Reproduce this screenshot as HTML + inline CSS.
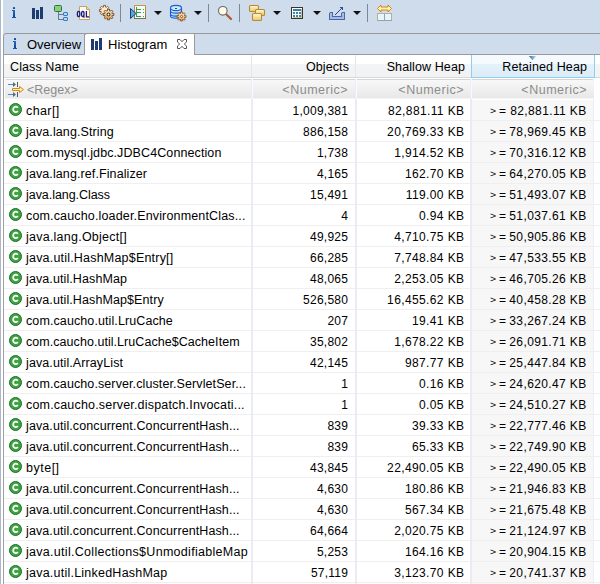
<!DOCTYPE html>
<html><head><meta charset="utf-8">
<style>
*{box-sizing:border-box}
html,body{margin:0;padding:0}
body{width:600px;height:584px;overflow:hidden;position:relative;background:#cfdcec;font-family:"Liberation Sans",sans-serif;font-size:12px;color:#000}
.a{position:absolute}
#edge0{left:0;top:0;width:1px;height:584px;background:#adb5cb}
#edge1{left:1px;top:0;width:2px;height:584px;background:#fff}
.sep{position:absolute;top:4px;width:1px;height:18px;background:#7a8898}
.dd{position:absolute;top:11px;width:0;height:0;border-left:4px solid transparent;border-right:4px solid transparent;border-top:4.5px solid #111}
/* tabs */
#tabline{left:194px;top:33px;width:406px;height:22px;border-top:1px solid #9a9a9a;border-bottom:1px solid #9a9a9a}
#tab1{left:3px;top:33px;width:82px;height:22px;border:1px solid #9a9a9a;border-radius:3px 0 0 0;background:#cfdcec}
#tab2{left:85px;top:33px;width:110px;height:22px;border:1px solid #9a9a9a;border-bottom:none;border-left:none;background:#fff}
.tt{position:absolute;top:37px;font-size:13px;white-space:nowrap}
/* table */
#tbl{left:3px;top:55px;width:597px;height:529px;background:#fff;border-left:1px solid #a0a0a0}
#hdr{left:4px;top:55px;width:596px;height:23px;background:linear-gradient(#fff 0,#fff 9px,#f3f4f6 9px,#f1f2f4 22px)}
#hdrb{left:4px;top:77px;width:596px;height:1px;background:#d8d8d8}
.hs{position:absolute;top:55px;width:1px;height:22px;background:#e4e6ea}
#rh{left:471px;top:55px;width:124px;height:23px;border:1px solid #90cdf2;border-top:none;background:linear-gradient(#f4fafe 0,#f4fafe 9px,#e4f2fb 9px,#dcecf8 22px)}
.ht{position:absolute;top:60px;white-space:nowrap;font-size:12.5px;letter-spacing:0.1px}
#fstrip{left:5px;top:79px;width:589px;height:20px;border-top:1px solid #d6d6d6;border-radius:2px 2px 0 0;background:linear-gradient(#f8f8f8,#e8e8e8 18px,#f4f4f4 18px)}
.fsep{position:absolute;top:79px;width:2px;height:20px;border-left:1px solid #e8eefa;border-right:1px solid #fafafa}
.ft{position:absolute;top:83px;white-space:nowrap;color:#8c8c8c;font-size:12.5px;letter-spacing:0.5px}
.row{position:absolute;left:4px;width:596px;height:21px;border-bottom:1px solid #efefef}
.vl{position:absolute;top:99px;height:485px;width:2px;border-left:1px solid #e6eefa;border-right:1px solid #ececec;z-index:2}
#rcol{left:472px;top:100px;width:121px;height:484px;background:#f7f7f7}
.c{position:absolute;white-space:nowrap;top:4px;letter-spacing:0.15px}
.cn{left:22px;font-size:12.5px;letter-spacing:0.1px}
.n1{right:251.8px;letter-spacing:0.25px}
.n2{right:135.6px;letter-spacing:0.38px}
.n3{right:13.4px;letter-spacing:0.38px}
.gt{position:absolute;left:486px;top:4px;font-size:10.5px;transform:scaleY(0.8);transform-origin:50% 75%}
.eq{position:absolute;left:495px;top:4px}
.ic{position:absolute;left:5px;top:3px;width:14px;height:14px}
.srt{position:absolute;left:529px;top:56px;width:0;height:0;border-left:3.5px solid transparent;border-right:3.5px solid transparent;border-top:4px solid #5a9ac0}
</style></head><body>
<div class="a" id="edge0"></div><div class="a" id="edge1"></div>

<!-- toolbar separators -->
<div class="sep" style="left:120px"></div>
<div class="sep" style="left:208px"></div>
<div class="sep" style="left:239px"></div>
<div class="sep" style="left:367px"></div>
<div class="dd" style="left:154px"></div>
<div class="dd" style="left:194px"></div>
<div class="dd" style="left:273px"></div>
<div class="dd" style="left:313px"></div>
<div class="dd" style="left:353px"></div>

<!-- tabs -->
<div class="a" id="tabline"></div>
<div class="a" id="tab1"></div>
<div class="a" id="tab2"></div>
<div class="a" style="left:85px;top:34px;width:1px;height:1px;background:#b0b0b0"></div>
<div class="tt" style="left:27px">Overview</div>
<div class="tt" style="left:108px">Histogram</div>

<!-- table -->
<div class="a" id="tbl"></div>
<div class="a" id="hdr"></div>
<div class="a" id="hdrb"></div>
<div class="hs" style="left:251px"></div>
<div class="hs" style="left:355px"></div>
<div class="a" id="rh"></div>
<svg class="a" style="left:528px;top:55px" width="10" height="7" viewBox="0 0 10 7"><defs><linearGradient id="gS" x1="0" y1="0" x2="1" y2="0"><stop offset="0" stop-color="#3a6c94"/><stop offset="1" stop-color="#b4def6"/></linearGradient></defs><path d="M0.8,1 H8.2 L4.5,5.2 Z" fill="url(#gS)"/></svg>
<div class="ht" style="left:10px">Class Name</div>
<div class="ht" style="right:251px">Objects</div>
<div class="ht" style="right:135px">Shallow Heap</div>
<div class="ht" style="right:13px">Retained Heap</div>

<div class="a" id="fstrip"></div>
<div class="fsep" style="left:251px"></div>
<div class="fsep" style="left:355px"></div>
<div class="fsep" style="left:470px"></div>
<div class="ft" style="left:27px;letter-spacing:0">&lt;Regex&gt;</div>
<div class="ft" style="right:252px">&lt;Numeric&gt;</div>
<div class="ft" style="right:136px">&lt;Numeric&gt;</div>
<div class="ft" style="right:13px">&lt;Numeric&gt;</div>

<div class="a" id="rcol"></div>
<div class="vl" style="left:251px"></div>
<div class="vl" style="left:355px"></div>
<div class="vl" style="left:470px"></div>
<div class="vl" style="left:593px;width:1px;border-right:none"></div>
<div class="row" style="top:100px"><svg class="ic" width="14" height="14" viewBox="0 0 14 14"><circle cx="6.5" cy="6.5" r="6" fill="#3ca33e" stroke="#1f6e2c" stroke-width="1"/><path d="M8.85,4.8 A2.6,2.75 0 1 0 8.85,8.1" fill="none" stroke="#fff" stroke-width="1.75"/></svg><div class="c cn" style="letter-spacing:0.4px">char[]</div><div class="c n1">1,009,381</div><div class="c n2">82,881.11 KB</div><div class="gt">&gt;</div><div class="eq">=</div><div class="c n3">82,881.11 KB</div></div>
<div class="row" style="top:121px"><svg class="ic" width="14" height="14" viewBox="0 0 14 14"><circle cx="6.5" cy="6.5" r="6" fill="#3ca33e" stroke="#1f6e2c" stroke-width="1"/><path d="M8.85,4.8 A2.6,2.75 0 1 0 8.85,8.1" fill="none" stroke="#fff" stroke-width="1.75"/></svg><div class="c cn">java.lang.String</div><div class="c n1">886,158</div><div class="c n2">20,769.33 KB</div><div class="gt">&gt;</div><div class="eq">=</div><div class="c n3">78,969.45 KB</div></div>
<div class="row" style="top:142px"><svg class="ic" width="14" height="14" viewBox="0 0 14 14"><circle cx="6.5" cy="6.5" r="6" fill="#3ca33e" stroke="#1f6e2c" stroke-width="1"/><path d="M8.85,4.8 A2.6,2.75 0 1 0 8.85,8.1" fill="none" stroke="#fff" stroke-width="1.75"/></svg><div class="c cn">com.mysql.jdbc.JDBC4Connection</div><div class="c n1">1,738</div><div class="c n2">1,914.52 KB</div><div class="gt">&gt;</div><div class="eq">=</div><div class="c n3">70,316.12 KB</div></div>
<div class="row" style="top:163px"><svg class="ic" width="14" height="14" viewBox="0 0 14 14"><circle cx="6.5" cy="6.5" r="6" fill="#3ca33e" stroke="#1f6e2c" stroke-width="1"/><path d="M8.85,4.8 A2.6,2.75 0 1 0 8.85,8.1" fill="none" stroke="#fff" stroke-width="1.75"/></svg><div class="c cn">java.lang.ref.Finalizer</div><div class="c n1">4,165</div><div class="c n2">162.70 KB</div><div class="gt">&gt;</div><div class="eq">=</div><div class="c n3">64,270.05 KB</div></div>
<div class="row" style="top:184px"><svg class="ic" width="14" height="14" viewBox="0 0 14 14"><circle cx="6.5" cy="6.5" r="6" fill="#3ca33e" stroke="#1f6e2c" stroke-width="1"/><path d="M8.85,4.8 A2.6,2.75 0 1 0 8.85,8.1" fill="none" stroke="#fff" stroke-width="1.75"/></svg><div class="c cn" style="letter-spacing:-0.05px">java.lang.Class</div><div class="c n1">15,491</div><div class="c n2">119.00 KB</div><div class="gt">&gt;</div><div class="eq">=</div><div class="c n3">51,493.07 KB</div></div>
<div class="row" style="top:205px"><svg class="ic" width="14" height="14" viewBox="0 0 14 14"><circle cx="6.5" cy="6.5" r="6" fill="#3ca33e" stroke="#1f6e2c" stroke-width="1"/><path d="M8.85,4.8 A2.6,2.75 0 1 0 8.85,8.1" fill="none" stroke="#fff" stroke-width="1.75"/></svg><div class="c cn" style="letter-spacing:0.155px">com.caucho.loader.EnvironmentClas...</div><div class="c n1">4</div><div class="c n2">0.94 KB</div><div class="gt">&gt;</div><div class="eq">=</div><div class="c n3">51,037.61 KB</div></div>
<div class="row" style="top:226px"><svg class="ic" width="14" height="14" viewBox="0 0 14 14"><circle cx="6.5" cy="6.5" r="6" fill="#3ca33e" stroke="#1f6e2c" stroke-width="1"/><path d="M8.85,4.8 A2.6,2.75 0 1 0 8.85,8.1" fill="none" stroke="#fff" stroke-width="1.75"/></svg><div class="c cn" style="letter-spacing:0.24px">java.lang.Object[]</div><div class="c n1">49,925</div><div class="c n2">4,710.75 KB</div><div class="gt">&gt;</div><div class="eq">=</div><div class="c n3">50,905.86 KB</div></div>
<div class="row" style="top:247px"><svg class="ic" width="14" height="14" viewBox="0 0 14 14"><circle cx="6.5" cy="6.5" r="6" fill="#3ca33e" stroke="#1f6e2c" stroke-width="1"/><path d="M8.85,4.8 A2.6,2.75 0 1 0 8.85,8.1" fill="none" stroke="#fff" stroke-width="1.75"/></svg><div class="c cn" style="letter-spacing:0.2px">java.util.HashMap$Entry[]</div><div class="c n1">66,285</div><div class="c n2">7,748.84 KB</div><div class="gt">&gt;</div><div class="eq">=</div><div class="c n3">47,533.55 KB</div></div>
<div class="row" style="top:268px"><svg class="ic" width="14" height="14" viewBox="0 0 14 14"><circle cx="6.5" cy="6.5" r="6" fill="#3ca33e" stroke="#1f6e2c" stroke-width="1"/><path d="M8.85,4.8 A2.6,2.75 0 1 0 8.85,8.1" fill="none" stroke="#fff" stroke-width="1.75"/></svg><div class="c cn">java.util.HashMap</div><div class="c n1">48,065</div><div class="c n2">2,253.05 KB</div><div class="gt">&gt;</div><div class="eq">=</div><div class="c n3">46,705.26 KB</div></div>
<div class="row" style="top:289px"><svg class="ic" width="14" height="14" viewBox="0 0 14 14"><circle cx="6.5" cy="6.5" r="6" fill="#3ca33e" stroke="#1f6e2c" stroke-width="1"/><path d="M8.85,4.8 A2.6,2.75 0 1 0 8.85,8.1" fill="none" stroke="#fff" stroke-width="1.75"/></svg><div class="c cn">java.util.HashMap$Entry</div><div class="c n1">526,580</div><div class="c n2">16,455.62 KB</div><div class="gt">&gt;</div><div class="eq">=</div><div class="c n3">40,458.28 KB</div></div>
<div class="row" style="top:310px"><svg class="ic" width="14" height="14" viewBox="0 0 14 14"><circle cx="6.5" cy="6.5" r="6" fill="#3ca33e" stroke="#1f6e2c" stroke-width="1"/><path d="M8.85,4.8 A2.6,2.75 0 1 0 8.85,8.1" fill="none" stroke="#fff" stroke-width="1.75"/></svg><div class="c cn">com.caucho.util.LruCache</div><div class="c n1">207</div><div class="c n2">19.41 KB</div><div class="gt">&gt;</div><div class="eq">=</div><div class="c n3">33,267.24 KB</div></div>
<div class="row" style="top:331px"><svg class="ic" width="14" height="14" viewBox="0 0 14 14"><circle cx="6.5" cy="6.5" r="6" fill="#3ca33e" stroke="#1f6e2c" stroke-width="1"/><path d="M8.85,4.8 A2.6,2.75 0 1 0 8.85,8.1" fill="none" stroke="#fff" stroke-width="1.75"/></svg><div class="c cn" style="letter-spacing:0.05px">com.caucho.util.LruCache$CacheItem</div><div class="c n1">35,802</div><div class="c n2">1,678.22 KB</div><div class="gt">&gt;</div><div class="eq">=</div><div class="c n3">26,091.71 KB</div></div>
<div class="row" style="top:352px"><svg class="ic" width="14" height="14" viewBox="0 0 14 14"><circle cx="6.5" cy="6.5" r="6" fill="#3ca33e" stroke="#1f6e2c" stroke-width="1"/><path d="M8.85,4.8 A2.6,2.75 0 1 0 8.85,8.1" fill="none" stroke="#fff" stroke-width="1.75"/></svg><div class="c cn">java.util.ArrayList</div><div class="c n1">42,145</div><div class="c n2">987.77 KB</div><div class="gt">&gt;</div><div class="eq">=</div><div class="c n3">25,447.84 KB</div></div>
<div class="row" style="top:373px"><svg class="ic" width="14" height="14" viewBox="0 0 14 14"><circle cx="6.5" cy="6.5" r="6" fill="#3ca33e" stroke="#1f6e2c" stroke-width="1"/><path d="M8.85,4.8 A2.6,2.75 0 1 0 8.85,8.1" fill="none" stroke="#fff" stroke-width="1.75"/></svg><div class="c cn">com.caucho.server.cluster.ServletSer...</div><div class="c n1">1</div><div class="c n2">0.16 KB</div><div class="gt">&gt;</div><div class="eq">=</div><div class="c n3">24,620.47 KB</div></div>
<div class="row" style="top:394px"><svg class="ic" width="14" height="14" viewBox="0 0 14 14"><circle cx="6.5" cy="6.5" r="6" fill="#3ca33e" stroke="#1f6e2c" stroke-width="1"/><path d="M8.85,4.8 A2.6,2.75 0 1 0 8.85,8.1" fill="none" stroke="#fff" stroke-width="1.75"/></svg><div class="c cn" style="letter-spacing:0.18px">com.caucho.server.dispatch.Invocati...</div><div class="c n1">1</div><div class="c n2">0.05 KB</div><div class="gt">&gt;</div><div class="eq">=</div><div class="c n3">24,510.27 KB</div></div>
<div class="row" style="top:415px"><svg class="ic" width="14" height="14" viewBox="0 0 14 14"><circle cx="6.5" cy="6.5" r="6" fill="#3ca33e" stroke="#1f6e2c" stroke-width="1"/><path d="M8.85,4.8 A2.6,2.75 0 1 0 8.85,8.1" fill="none" stroke="#fff" stroke-width="1.75"/></svg><div class="c cn">java.util.concurrent.ConcurrentHash...</div><div class="c n1">839</div><div class="c n2">39.33 KB</div><div class="gt">&gt;</div><div class="eq">=</div><div class="c n3">22,777.46 KB</div></div>
<div class="row" style="top:436px"><svg class="ic" width="14" height="14" viewBox="0 0 14 14"><circle cx="6.5" cy="6.5" r="6" fill="#3ca33e" stroke="#1f6e2c" stroke-width="1"/><path d="M8.85,4.8 A2.6,2.75 0 1 0 8.85,8.1" fill="none" stroke="#fff" stroke-width="1.75"/></svg><div class="c cn">java.util.concurrent.ConcurrentHash...</div><div class="c n1">839</div><div class="c n2">65.33 KB</div><div class="gt">&gt;</div><div class="eq">=</div><div class="c n3">22,749.90 KB</div></div>
<div class="row" style="top:457px"><svg class="ic" width="14" height="14" viewBox="0 0 14 14"><circle cx="6.5" cy="6.5" r="6" fill="#3ca33e" stroke="#1f6e2c" stroke-width="1"/><path d="M8.85,4.8 A2.6,2.75 0 1 0 8.85,8.1" fill="none" stroke="#fff" stroke-width="1.75"/></svg><div class="c cn" style="letter-spacing:0.5px">byte[]</div><div class="c n1">43,845</div><div class="c n2">22,490.05 KB</div><div class="gt">&gt;</div><div class="eq">=</div><div class="c n3">22,490.05 KB</div></div>
<div class="row" style="top:478px"><svg class="ic" width="14" height="14" viewBox="0 0 14 14"><circle cx="6.5" cy="6.5" r="6" fill="#3ca33e" stroke="#1f6e2c" stroke-width="1"/><path d="M8.85,4.8 A2.6,2.75 0 1 0 8.85,8.1" fill="none" stroke="#fff" stroke-width="1.75"/></svg><div class="c cn">java.util.concurrent.ConcurrentHash...</div><div class="c n1">4,630</div><div class="c n2">180.86 KB</div><div class="gt">&gt;</div><div class="eq">=</div><div class="c n3">21,946.83 KB</div></div>
<div class="row" style="top:499px"><svg class="ic" width="14" height="14" viewBox="0 0 14 14"><circle cx="6.5" cy="6.5" r="6" fill="#3ca33e" stroke="#1f6e2c" stroke-width="1"/><path d="M8.85,4.8 A2.6,2.75 0 1 0 8.85,8.1" fill="none" stroke="#fff" stroke-width="1.75"/></svg><div class="c cn">java.util.concurrent.ConcurrentHash...</div><div class="c n1">4,630</div><div class="c n2">567.34 KB</div><div class="gt">&gt;</div><div class="eq">=</div><div class="c n3">21,675.48 KB</div></div>
<div class="row" style="top:520px"><svg class="ic" width="14" height="14" viewBox="0 0 14 14"><circle cx="6.5" cy="6.5" r="6" fill="#3ca33e" stroke="#1f6e2c" stroke-width="1"/><path d="M8.85,4.8 A2.6,2.75 0 1 0 8.85,8.1" fill="none" stroke="#fff" stroke-width="1.75"/></svg><div class="c cn">java.util.concurrent.ConcurrentHash...</div><div class="c n1">64,664</div><div class="c n2">2,020.75 KB</div><div class="gt">&gt;</div><div class="eq">=</div><div class="c n3">21,124.97 KB</div></div>
<div class="row" style="top:541px"><svg class="ic" width="14" height="14" viewBox="0 0 14 14"><circle cx="6.5" cy="6.5" r="6" fill="#3ca33e" stroke="#1f6e2c" stroke-width="1"/><path d="M8.85,4.8 A2.6,2.75 0 1 0 8.85,8.1" fill="none" stroke="#fff" stroke-width="1.75"/></svg><div class="c cn" style="letter-spacing:0.29px">java.util.Collections$UnmodifiableMap</div><div class="c n1">5,253</div><div class="c n2">164.16 KB</div><div class="gt">&gt;</div><div class="eq">=</div><div class="c n3">20,904.15 KB</div></div>
<div class="row" style="top:562px"><svg class="ic" width="14" height="14" viewBox="0 0 14 14"><circle cx="6.5" cy="6.5" r="6" fill="#3ca33e" stroke="#1f6e2c" stroke-width="1"/><path d="M8.85,4.8 A2.6,2.75 0 1 0 8.85,8.1" fill="none" stroke="#fff" stroke-width="1.75"/></svg><div class="c cn" style="letter-spacing:0.23px">java.util.LinkedHashMap</div><div class="c n1">57,119</div><div class="c n2">3,123.70 KB</div><div class="gt">&gt;</div><div class="eq">=</div><div class="c n3">20,741.37 KB</div></div>
<svg class="a" style="left:0;top:0" width="600" height="100" viewBox="0 0 600 100" shape-rendering="crispEdges">
<defs>
<linearGradient id="gI" x1="0" y1="0" x2="0" y2="1"><stop offset="0" stop-color="#2a6cc0"/><stop offset="1" stop-color="#08408e"/></linearGradient>
<linearGradient id="gG" x1="0" y1="0" x2="0" y2="1"><stop offset="0" stop-color="#fff6c8"/><stop offset="1" stop-color="#e8a848"/></linearGradient>
<linearGradient id="gG2" x1="0" y1="0" x2="0" y2="1"><stop offset="0" stop-color="#fffbe0"/><stop offset="1" stop-color="#f2d890"/></linearGradient>
<linearGradient id="gY" x1="0" y1="0" x2="0" y2="1"><stop offset="0" stop-color="#fff8d8"/><stop offset="1" stop-color="#e8c868"/></linearGradient>
<linearGradient id="gDB" x1="0" y1="0" x2="0" y2="1"><stop offset="0" stop-color="#d0eef8"/><stop offset="1" stop-color="#a8dcec"/></linearGradient>
</defs>
<g fill="url(#gI)"><rect x="13" y="7" width="2" height="2"/><rect x="12" y="10" width="3" height="1"/><rect x="13" y="10" width="2" height="8"/><rect x="12" y="17" width="4" height="1"/></g>
<g fill="#1d3c70"><rect x="32" y="8" width="3" height="11"/><rect x="36" y="10" width="3" height="9"/><rect x="40" y="7" width="3" height="12"/></g>
<path d="M58.5,12 V19.5 H63 M58.5,14.5 H63" stroke="#6a7888" fill="none" stroke-width="1"/>
<rect x="54.5" y="5.5" width="7" height="6" rx="1" fill="#90cc7c" stroke="#1f7a40" stroke-width="1" shape-rendering="auto"/>
<rect x="63.5" y="12.5" width="4" height="3" rx="0.5" fill="#a8e0f8" stroke="#3a78c8" shape-rendering="auto"/>
<rect x="63.5" y="17.5" width="4" height="3" rx="0.5" fill="#a8e0f8" stroke="#3a78c8" shape-rendering="auto"/>
<path d="M79.5,6.5 H86.5 L89.5,9.5 V19.5 H79.5 Z" fill="#fbfbfb" stroke="#c8a458" shape-rendering="auto"/>
<path d="M86.5,6.5 V9.5 H89.5" fill="#f0d890" stroke="#c8a458" shape-rendering="auto"/>
<g fill="none" stroke="#1c1c78" stroke-width="1.3" shape-rendering="auto"><ellipse cx="78.6" cy="14" rx="1.25" ry="2.6"/><ellipse cx="82.8" cy="14" rx="1.25" ry="2.6"/><path d="M83.2,15.8 L84.4,17.6"/><path d="M86.4,11 V16.8 H89.2"/></g>
<path d="M109.60,9.49 L109.60,11.51 L107.98,11.41 L107.61,12.32 L108.82,13.39 L107.39,14.82 L106.32,13.61 L105.41,13.98 L105.51,15.60 L103.49,15.60 L103.59,13.98 L102.68,13.61 L101.61,14.82 L100.18,13.39 L101.39,12.32 L101.02,11.41 L99.40,11.51 L99.40,9.49 L101.02,9.59 L101.39,8.68 L100.18,7.61 L101.61,6.18 L102.68,7.39 L103.59,7.02 L103.49,5.40 L105.51,5.40 L105.41,7.02 L106.32,7.39 L107.39,6.18 L108.82,7.61 L107.61,8.68 L107.98,9.59Z" fill="url(#gG2)" stroke="#8a5a48" stroke-width="1" shape-rendering="auto"/>
<path d="M113.80,13.45 L113.80,15.55 L112.18,15.46 L111.78,16.42 L112.99,17.50 L111.50,18.99 L110.42,17.78 L109.46,18.18 L109.55,19.80 L107.45,19.80 L107.54,18.18 L106.58,17.78 L105.50,18.99 L104.01,17.50 L105.22,16.42 L104.82,15.46 L103.20,15.55 L103.20,13.45 L104.82,13.54 L105.22,12.58 L104.01,11.50 L105.50,10.01 L106.58,11.22 L107.54,10.82 L107.45,9.20 L109.55,9.20 L109.46,10.82 L110.42,11.22 L111.50,10.01 L112.99,11.50 L111.78,12.58 L112.18,13.54Z" fill="url(#gG)" stroke="#7a4a38" stroke-width="1" shape-rendering="auto"/>
<circle cx="108.5" cy="14.5" r="1.5" fill="#fff" stroke="#4a3838" stroke-width="1.1" shape-rendering="auto"/>
<linearGradient id="gLB" x1="0" y1="0" x2="0" y2="1"><stop offset="0" stop-color="#c89a40"/><stop offset="1" stop-color="#7a7048"/></linearGradient>
<rect x="134" y="5" width="12" height="14" fill="url(#gLB)"/><rect x="135" y="6" width="10" height="12" fill="#f6faf6"/>
<g fill="#3a9a55"><rect x="136" y="7" width="1" height="10"/><rect x="136" y="9" width="5" height="1.3"/><rect x="136" y="12" width="5" height="1.3"/><rect x="136" y="15.7" width="5" height="1.3"/><rect x="143" y="9" width="1.3" height="1.3"/><rect x="143" y="12" width="1.3" height="1.3"/><rect x="143" y="15.7" width="1.3" height="1.3"/></g>
<path d="M130.5,8.5 L136,13.5 L130.5,18.5 Z" fill="#5aa8c8" stroke="#1a3c8c" shape-rendering="auto"/>
<g shape-rendering="auto" stroke="#1c5ad8" stroke-width="1.1">
<path d="M170.5,8 V16 C170.5,19 181.5,19 181.5,16 V8" fill="url(#gDB)"/>
<ellipse cx="176" cy="8" rx="5.5" ry="2.6" fill="#c8ecf8"/>
<path d="M170.5,11 C170.5,13.8 181.5,13.8 181.5,11 M170.5,14 C170.5,16.8 181.5,16.8 181.5,14" fill="none"/>
</g>
<rect x="175" y="7.5" width="2" height="1" fill="#1a4aa0"/>
<path d="M186.01,15.60 L186.01,17.40 L184.60,17.31 L184.26,18.12 L185.32,19.06 L184.06,20.32 L183.12,19.26 L182.31,19.60 L182.40,21.01 L180.60,21.01 L180.69,19.60 L179.88,19.26 L178.94,20.32 L177.68,19.06 L178.74,18.12 L178.40,17.31 L176.99,17.40 L176.99,15.60 L178.40,15.69 L178.74,14.88 L177.68,13.94 L178.94,12.68 L179.88,13.74 L180.69,13.40 L180.60,11.99 L182.40,11.99 L182.31,13.40 L183.12,13.74 L184.06,12.68 L185.32,13.94 L184.26,14.88 L184.60,15.69Z" fill="url(#gG)" stroke="#8a5030" stroke-width="0.9" shape-rendering="auto"/>
<circle cx="181.5" cy="16.5" r="1.1" fill="#fff" stroke="#5a4040" stroke-width="0.8" shape-rendering="auto"/>
<g shape-rendering="auto"><path d="M226.5,14.5 L231,19" stroke="#b05a30" stroke-width="2.2" stroke-linecap="round"/>
<circle cx="222.8" cy="10.8" r="4.3" fill="#fffbe6" stroke="#6a6a68" stroke-width="1.1"/></g>
<g shape-rendering="auto" stroke="#b88a30" stroke-width="1.1" fill="url(#gY)">
<rect x="249.5" y="5.5" width="9" height="6" rx="1"/><rect x="255.5" y="9.5" width="9" height="6" rx="1"/><rect x="252.5" y="13.5" width="9" height="7" rx="1"/></g>
<rect x="291.5" y="7.5" width="11" height="11" fill="#fdfdf8" stroke="#3a3428"/>
<path d="M292.5,17.5 H301.5 V8.5" stroke="#cfc898" fill="none"/>
<rect x="293" y="9" width="8" height="2" fill="#3a80b0"/>
<g fill="#3a84b4"><rect x="293" y="12" width="2" height="2"/><rect x="293" y="15" width="2" height="2"/><rect x="296" y="12" width="2" height="2"/><rect x="296" y="15" width="2" height="2"/><rect x="299" y="12" width="2" height="2"/><rect x="299" y="15" width="2" height="2"/></g>
<path d="M329,12 H333 V16 H341 V12 H345 V20 H329 Z" fill="#a8bce0"/>
<path d="M329.5,12.5 V19.5 H344.5 V12.5 M332.5,12.5 V16.5 H341.5 V12.5 M329.5,12.5 H332.5 M341.5,12.5 H344.5" stroke="#4a68a8" fill="none"/>
<path d="M335,15 L341,9" stroke="#3a3aa0" stroke-width="1" shape-rendering="auto"/>
<path d="M339,7 H343 V11 Z" fill="#1a5aa0"/>
<path d="M377.5,8.5 L381,5 V7 H388 V5 L391.5,8.5 L388,12 V10 H381 V12 Z" fill="#fff0b8" stroke="#d08818" shape-rendering="auto"/>
<rect x="377.5" y="13.5" width="14" height="7" fill="#e4f6fc" stroke="#b8b090"/>
<path d="M384.5,13.5 V20.5 M377.5,20.5 H391.5" stroke="#9aa0b0"/>
<g fill="url(#gI)"><rect x="14" y="38" width="2" height="2"/><rect x="13" y="41" width="3" height="1"/><rect x="14" y="41" width="2" height="8"/><rect x="13" y="48" width="4" height="1"/></g>
<g fill="#1d3c70"><rect x="91" y="39" width="3" height="11"/><rect x="95" y="41" width="3" height="9"/><rect x="99" y="38" width="3" height="12"/></g>
<path d="M177.5,39.5 H180 L182,41.7 L184,39.5 H186.5 V42 L184.3,44 L186.5,46 V48.5 H184 L182,46.3 L180,48.5 H177.5 V46 L179.7,44 L177.5,42 Z" fill="none" stroke="#555" stroke-width="1" shape-rendering="auto"/>
<path d="M8,84.5 H14" stroke="#4a90c8"/><path d="M8,94.5 H14" stroke="#4a90c8"/>
<path d="M13,82 L16,84.5 L13,87 Z M13,92 L16,94.5 L13,97 Z" fill="#5a6878" shape-rendering="auto"/>
<rect x="17" y="82" width="1" height="5" fill="#4a5a78"/><rect x="17" y="92" width="1" height="5" fill="#4a5a78"/>
<path d="M12.5,88.5 H19.5 V86.5 L23.5,89.5 L19.5,92.5 V90.5 H12.5 Z" fill="#fff0b0" stroke="#d08818" shape-rendering="auto"/>
</svg>
</body></html>
